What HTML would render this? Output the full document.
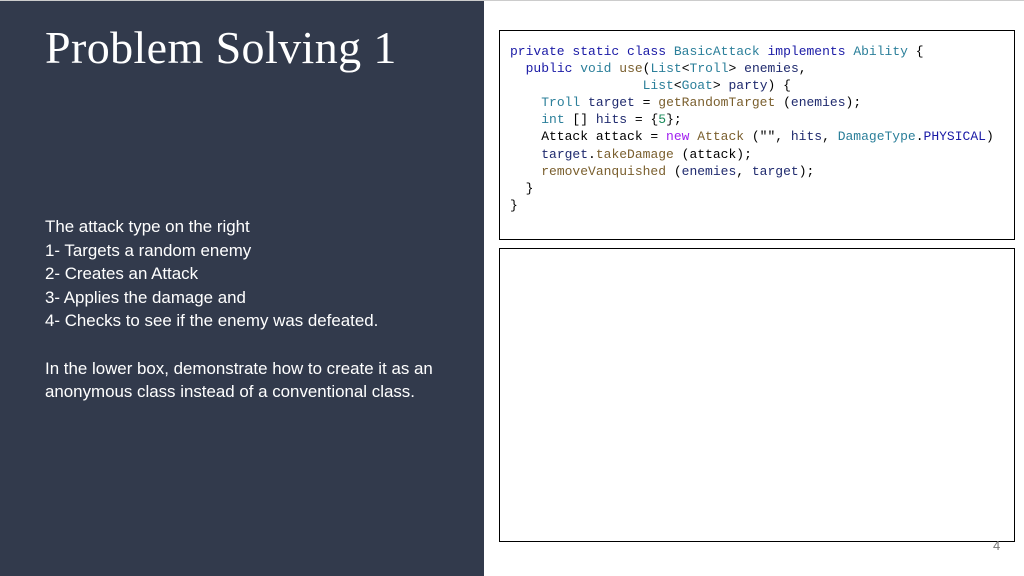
<!DOCTYPE html>
<html><head><style>
body{margin:0;width:1024px;height:576px;background:#fff;position:relative;overflow:hidden;font-family:"Liberation Sans",sans-serif}
.top{position:absolute;left:0;top:0;width:1024px;height:1px;background:#ccc}
.left{position:absolute;left:0;top:1px;width:484px;height:575px;background:#323a4c;color:#fff}
h1{position:absolute;left:45px;top:20px;margin:0;font-family:"Liberation Serif",serif;font-weight:normal;font-size:46px;letter-spacing:0.4px}
.txt{position:absolute;left:45px;top:214px;font-size:16.9px;line-height:23.6px;color:#fff}
.box{position:absolute;left:499px;width:514px;border:1px solid #000;background:#fff}
pre{margin:0;position:absolute;left:510px;top:43px;font-family:"Liberation Mono",monospace;font-size:13px;line-height:17.1px;color:#000}
.k{color:#1a1aa6}.t{color:#2b7f9a}.m{color:#7a5f2e}.v{color:#1f2a6e}.n{color:#a020f0}.g{color:#1a8a5a}
.num{position:absolute;left:993px;top:538px;font-size:13px;color:#777}
</style></head><body>
<div class="top"></div>
<div class="left">
<h1>Problem Solving 1</h1>
<div class="txt">The attack type on the right<br>1- Targets a random enemy<br>2- Creates an Attack<br>3- Applies the damage and<br>4- Checks to see if the enemy was defeated.<br><br>In the lower box, demonstrate how to create it as an<br>anonymous class instead of a conventional class.</div>
</div>
<div class="box" style="top:30px;height:208px"></div>
<div class="box" style="top:248px;height:292px"></div>
<pre><span class="k">private static class</span> <span class="t">BasicAttack</span> <span class="k">implements</span> <span class="t">Ability</span> {
  <span class="k">public</span> <span class="t">void</span> <span class="m">use</span>(<span class="t">List</span>&lt;<span class="t">Troll</span>&gt; <span class="v">enemies</span>,
                 <span class="t">List</span>&lt;<span class="t">Goat</span>&gt; <span class="v">party</span>) {
    <span class="t">Troll</span> <span class="v">target</span> = <span class="m">getRandomTarget</span> (<span class="v">enemies</span>);
    <span class="t">int</span> [] <span class="v">hits</span> = {<span class="g">5</span>};
    Attack attack = <span class="n">new</span> <span class="m">Attack</span> ("", <span class="v">hits</span>, <span class="t">DamageType</span>.<span class="k">PHYSICAL</span>)
    <span class="v">target</span>.<span class="m">takeDamage</span> (attack);
    <span class="m">removeVanquished</span> (<span class="v">enemies</span>, <span class="v">target</span>);
  }
}</pre>
<div class="num">4</div>
</body></html>
